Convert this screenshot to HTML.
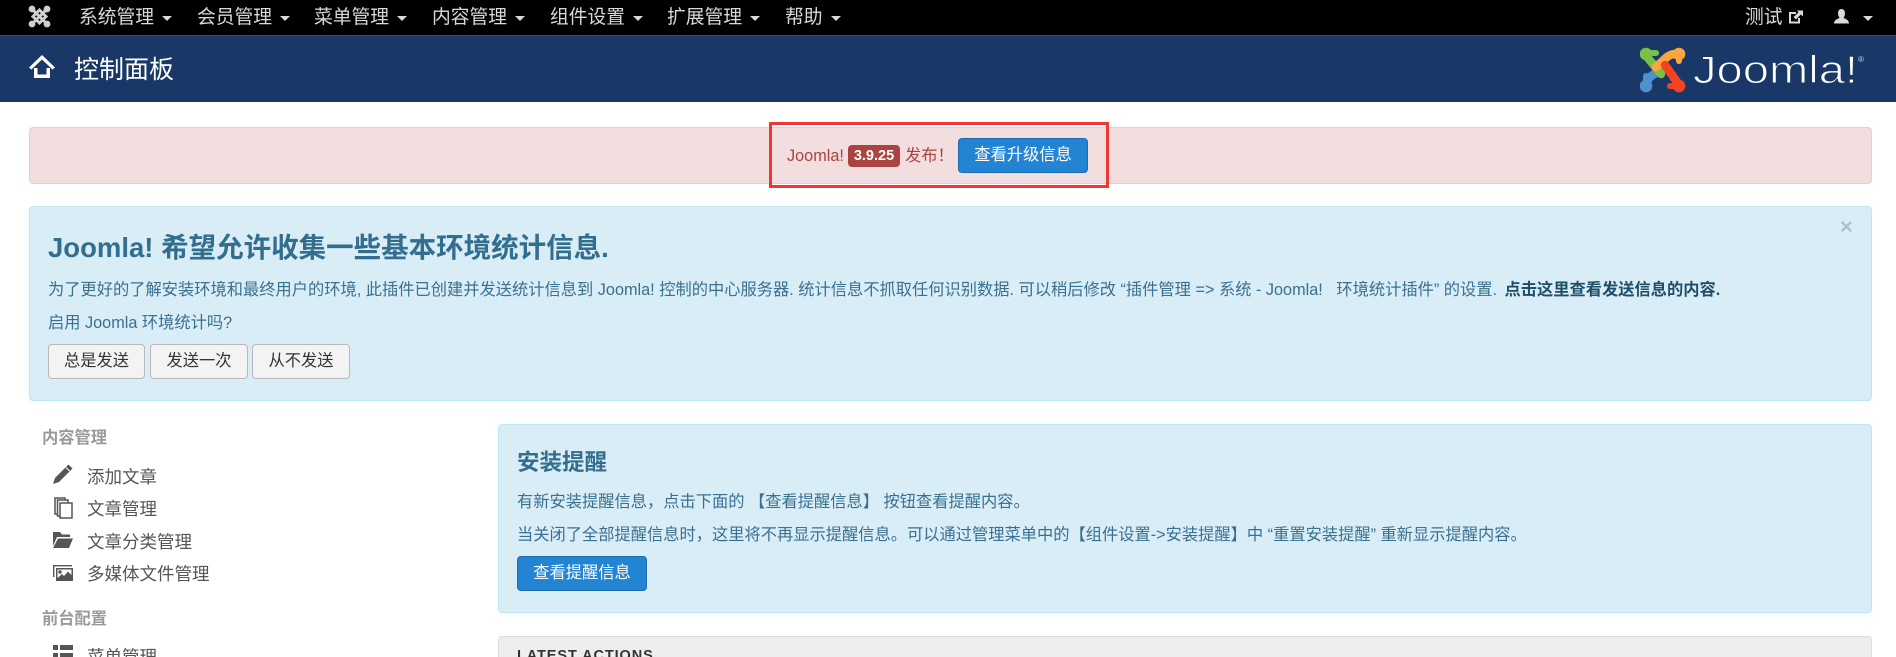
<!DOCTYPE html>
<html lang="zh-CN"><head><meta charset="utf-8"><title>控制面板</title>
<style>
html{margin:0;padding:0;background:#fff;width:1896px;height:657px;overflow:hidden}
body{margin:0;padding:0;background:#fff;position:relative;width:1896px;height:657px;overflow:hidden;font-family:"Liberation Sans","Noto Sans CJK SC",sans-serif;font-size:16.25px;color:#555}
.a{position:absolute;white-space:nowrap}
.box{position:absolute;box-sizing:border-box;border-radius:4px}
.nav{position:absolute;top:5px;line-height:24px;font-size:18.75px;color:#d9d9d9;white-space:nowrap}
.car{position:absolute;width:0;height:0;border-left:5px solid transparent;border-right:5px solid transparent;border-top:5px solid #d9d9d9;top:16px}
.info{background:#d9edf7;border:1px solid #bce8f1}
.it{color:#3a7090;line-height:24px}
.gbtn{position:absolute;box-sizing:border-box;top:344px;width:97px;height:35px;background:#f3f3f3;border:1px solid #b8b8b8;border-radius:4px;text-align:center;line-height:33px;color:#333}
.bbtn{position:absolute;box-sizing:border-box;background:#2384d3;border:1px solid #1d6cb0;border-radius:4px;color:#fff;text-align:center;width:130px;height:35px;line-height:33px}
.sh{color:#999;font-weight:bold;line-height:24px;left:42px}
.si{color:#555;font-size:17.5px;line-height:26px;left:87px}
svg{position:absolute;display:block}
</style></head><body>

<div class="a" style="left:0;top:0;width:1896px;height:35px;background:#000"></div>
<div class="a" style="left:0;top:35px;width:1896px;height:67px;background:#1a3867;border-top:1px solid #2f4e7c;box-sizing:border-box"></div>

<svg style="left:28px;top:5px" width="23" height="23" viewBox="0 0 23 23"><g stroke="#cfcfcf" stroke-width="3" fill="none"><path d="M4 4 L19 19 M19 4 L4 19 M11.500 5 L18 11.500 L11.500 18 L5 11.500Z"/></g><g fill="#cfcfcf"><circle cx="4" cy="4" r="3.400"/><circle cx="19" cy="4" r="3.400"/><circle cx="4" cy="19" r="3.400"/><circle cx="19" cy="19" r="3.400"/></g></svg>

<span class="nav" style="left:79px">系统管理</span><i class="car" style="left:162px"></i>
<span class="nav" style="left:197px">会员管理</span><i class="car" style="left:280px"></i>
<span class="nav" style="left:314px">菜单管理</span><i class="car" style="left:397px"></i>
<span class="nav" style="left:432px">内容管理</span><i class="car" style="left:515px"></i>
<span class="nav" style="left:550px">组件设置</span><i class="car" style="left:633px"></i>
<span class="nav" style="left:667px">扩展管理</span><i class="car" style="left:750px"></i>
<span class="nav" style="left:785px">帮助</span><i class="car" style="left:831px"></i>

<span class="nav" style="left:1745px">测试</span>
<svg style="left:1788px;top:10px" width="15" height="14" viewBox="0 0 15 14"><path d="M8 3H2V12.500H11V8" fill="none" stroke="#d9d9d9" stroke-width="2"/><path d="M9 .5H15V6.500L12.800 4.500 8 9.500 5.500 7 10.500 2.500Z" fill="#d9d9d9"/></svg>
<svg style="left:1834px;top:9px" width="15" height="15" viewBox="0 0 15 15"><path d="M7.500 0C10 0 11 2 11 4.500 11 6.500 10 8 9.500 8.700 11 10 15 10.500 15 14.500H0C0 10.500 4 10 5.500 8.700 5 8 4 6.500 4 4.500 4 2 5 0 7.500 0Z" fill="#d9d9d9"/></svg>
<i class="car" style="left:1863px"></i>

<svg style="left:28px;top:54px" width="28" height="25" viewBox="0 0 28 25"><path d="M14 1 27 13.500 24.500 15.500 14 5.500 3.500 15.500 1 13.500Z" fill="#fff"/><path d="M6 14V24H22V14H18.500V20.500H9.500V14Z" fill="#fff"/></svg>
<span class="a" style="left:74px;top:55px;font-size:25px;line-height:30px;color:#fff">控制面板</span>

<svg style="left:1640px;top:47px" width="46" height="46" viewBox="0 0 46 46" fill="none" stroke-linecap="round" stroke-linejoin="round">
<circle cx="6" cy="39" r="6.300" fill="#5091cd"/><path d="M6 39V29" stroke="#5091cd" stroke-width="6"/>
<path d="M8 33C10 29 13 28 16 26L25 20" stroke="#5091cd" stroke-width="8.500"/>
<circle cx="6" cy="7" r="6.300" fill="#7ac143"/><path d="M6 6H16" stroke="#7ac143" stroke-width="6"/>
<path d="M8 11L21 27" stroke="#7ac143" stroke-width="8.500"/>
<circle cx="39" cy="7" r="6.300" fill="#f9a541"/><path d="M39 7V14" stroke="#f9a541" stroke-width="6"/>
<path d="M37 8C33 6 30 8 27 10L16 20" stroke="#f9a541" stroke-width="8.500"/>
<circle cx="39" cy="39" r="6.300" fill="#f44321"/><path d="M39 39H30" stroke="#f44321" stroke-width="6"/>
<path d="M37 35L25 18" stroke="#f44321" stroke-width="8.500"/>
</svg>
<svg style="left:1690px;top:48px" width="190" height="44" viewBox="0 0 190 44"><text x="3" y="35" font-family="Liberation Sans" font-size="39" fill="#fff" stroke="#1a3867" stroke-width="1" textLength="165" lengthAdjust="spacingAndGlyphs">Joomla!</text><text x="168" y="14" font-family="Liberation Sans" font-size="8" fill="#cfd6e2">®</text></svg>

<div class="box" style="left:29px;top:127px;width:1843px;height:57px;background:#f2dede;border:1px solid #ebccd1"></div>
<span class="a" style="left:787px;top:144px;line-height:24px;color:#a94442">Joomla!</span>
<span class="a" style="left:848px;top:145px;width:52px;height:22px;background:#a94442;border-radius:4px;color:#fff;font-weight:bold;font-size:14.500px;line-height:22px;text-align:center">3.9.25</span>
<span class="a" style="left:905px;top:144px;line-height:24px;color:#a94442">发布！</span>
<span class="bbtn" style="left:958px;top:138px">查看升级信息</span>
<div class="a" style="left:769px;top:122px;width:340px;height:66px;box-sizing:border-box;border:3px solid #f33535"></div>

<div class="box info" style="left:29px;top:206px;width:1843px;height:195px"></div>
<span class="a" style="left:48px;top:231px;font-size:27.500px;line-height:34px;font-weight:bold;color:#336e8e">Joomla! 希望允许收集一些基本环境统计信息.</span>
<span class="a" style="left:1840px;top:215px;font-size:22px;line-height:24px;font-weight:bold;color:#b3bfc6">×</span>
<span class="a it" style="left:48px;top:278px">为了更好的了解安装环境和最终用户的环境, 此插件已创建并发送统计信息到 Joomla! 控制的中心服务器. 统计信息不抓取任何识别数据. 可以稍后修改 “插件管理 =&gt; 系统 - Joomla!&nbsp;&nbsp; 环境统计插件” 的设置. <b style="color:#1d4f68;margin-left:3px">点击这里查看发送信息的内容.</b></span>
<span class="a it" style="left:48px;top:311px">启用 Joomla 环境统计吗?</span>
<span class="gbtn" style="left:48px">总是发送</span>
<span class="gbtn" style="left:150px;width:98px">发送一次</span>
<span class="gbtn" style="left:252px;width:98px">从不发送</span>

<span class="a sh" style="top:426px">内容管理</span>
<svg style="left:53px;top:464px" width="20" height="20" viewBox="0 0 20 20"><path d="M15.500.5 19.500 4.500 6 18 0 20 2 14Z" fill="#555"/><path d="M13 3.500 16.500 7" stroke="#fff" stroke-width="1"/></svg>
<span class="a si" style="left:87px;top:464px">添加文章</span>
<svg style="left:54px;top:497px" width="19" height="22" viewBox="0 0 19 22" fill="#fff" stroke="#555" stroke-width="1.500"><path d="M1 1H11V17H1Z"/><path d="M3.500 3H14V19H3.500Z"/><path d="M6 6H18V21H6Z"/></svg>
<span class="a si" style="left:87px;top:496px">文章管理</span>
<svg style="left:53px;top:532px" width="20" height="16" viewBox="0 0 20 16"><path d="M0 0H7L9 2.500H17V5H4L0 14Z" fill="#555"/><path d="M5 6.500H20L16 16H0Z" fill="#555"/></svg>
<span class="a si" style="left:87px;top:529px">文章分类管理</span>
<svg style="left:53px;top:565px" width="20" height="16" viewBox="0 0 20 16"><path d="M.700 12V.700H19" fill="none" stroke="#555" stroke-width="1.400"/><path d="M3 3H20V16H3Z" fill="#555"/><path d="M4.500 4.500H18.500V10L15 6.500 11 11 9 9 4.500 13Z" fill="#fff"/><circle cx="7" cy="7" r="1.700" fill="#555"/></svg>
<span class="a si" style="left:87px;top:561px">多媒体文件管理</span>

<span class="a sh" style="top:607px">前台配置</span>
<svg style="left:53px;top:645px" width="20" height="14" viewBox="0 0 20 14" fill="#555"><path d="M0 0H5V5H0ZM7 0H20V5H7ZM0 8H5V14H0ZM7 8H20V14H7Z"/></svg>
<span class="a si" style="left:87px;top:644px">菜单管理</span>

<div class="box info" style="left:498px;top:424px;width:1374px;height:189px"></div>
<span class="a" style="left:517px;top:449px;font-size:22.500px;line-height:28px;font-weight:bold;color:#336e8e">安装提醒</span>
<span class="a it" style="left:517px;top:490px">有新安装提醒信息，点击下面的 【查看提醒信息】 按钮查看提醒内容。</span>
<span class="a it" style="left:517px;top:523px">当关闭了全部提醒信息时，这里将不再显示提醒信息。可以通过管理菜单中的【组件设置-&gt;安装提醒】中 “重置安装提醒” 重新显示提醒内容。</span>
<span class="bbtn" style="left:517px;top:556px">查看提醒信息</span>

<div class="box" style="left:498px;top:636px;width:1374px;height:40px;background:#eee;border:1px solid #ddd"></div>
<span class="a" style="left:517px;top:645px;font-size:14.500px;line-height:22px;font-weight:bold;letter-spacing:.9px;color:#333">LATEST ACTIONS</span>
</body></html>
